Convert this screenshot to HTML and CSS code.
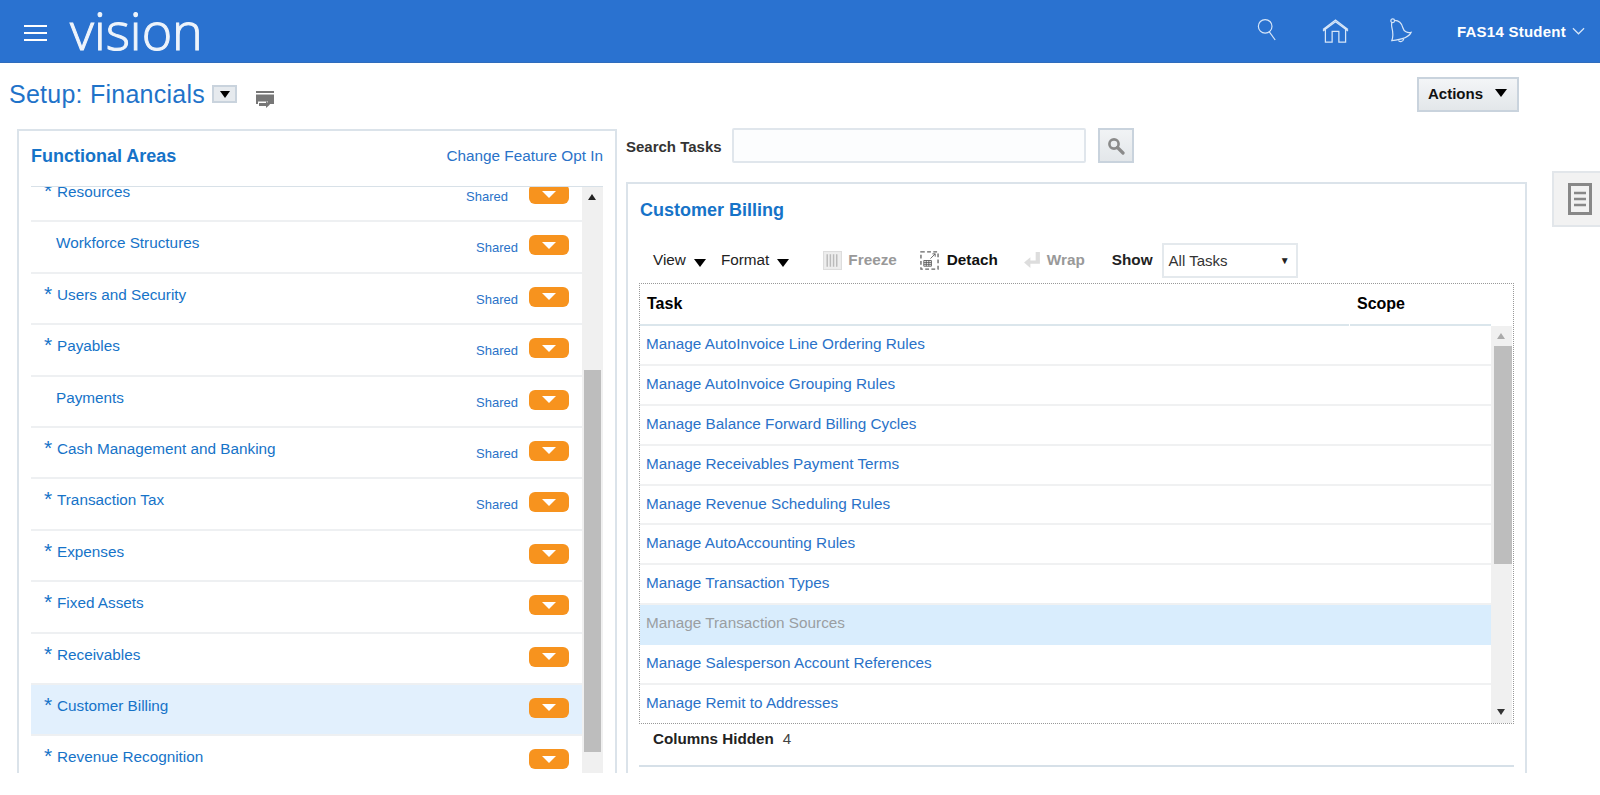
FILE: index.html
```html
<!DOCTYPE html>
<html lang="en">
<head>
<meta charset="utf-8">
<title>Setup: Financials</title>
<link rel="stylesheet" href="styles.css">
</head>
<body>
<header class="topbar">
  <div class="burger"><span></span><span></span><span></span></div>
  <div class="logo">vision</div>
  <div class="top-actions">
    <svg class="ti ti-search" viewBox="0 0 22 26"><circle cx="9" cy="9" r="7.5"/><path d="M13.5 15 L20 24"/></svg>
    <svg class="ti ti-home" viewBox="0 0 28 26"><path d="M1 12 L14 2 L27 12 M3.5 11 V25 H10.5 V14 H17.5 V25 H24.5 V11 M1 13.5 L14 4 L27 13.5"/></svg>
    <svg class="ti ti-bell" viewBox="0 0 26 28"><circle cx="4" cy="3.5" r="2"/><path d="M6 3 C11 3 14 7 15 11 C16 15 20 17 24 16 C22 21 13 24 3 25 C5 20 4 14 3 10 C2.5 8 3 6 3 5 M10 24 C11 27 15 27 16 23"/></svg>
    <span class="user">FAS14 Student</span>
    <svg class="ti ti-chev" viewBox="0 0 14 8"><path d="M1 1 L7 7 L13 1"/></svg>
  </div>
</header>

<div class="titlebar">
  <h1 class="page-title">Setup: Financials</h1>
  <span class="title-drop"><i class="tri tri-black"></i></span>
  <svg class="title-icon" viewBox="0 0 18 18"><path fill="#777" d="M0 0 H18 V2 H0 Z M0 3.5 H18 V13 H12 V10.5 H2 V13 H0 Z"/><path fill="#777" d="M3 12 H10 V10 L14 13.5 L10 17 V15 H3 Z"/></svg>
  <button class="actions-btn">Actions <i class="tri tri-black tri-actions"></i></button>
</div>

<main class="content">
  <section class="panel left-panel">
    <div class="left-head">
      <h2 class="panel-title">Functional Areas</h2>
      <a class="opt-in">Change Feature Opt In</a>
    </div>
    <div class="list-wrap">
      <div class="list">
        <div class="row row-first"><span class="star">*</span><a class="name">Resources</a><span class="shared shared-first">Shared</span><span class="badge"><i class="tri tri-white"></i></span></div>
        <div class="row"><span class="star"></span><a class="name name-plain">Workforce Structures</a><span class="shared">Shared</span><span class="badge"><i class="tri tri-white"></i></span></div>
        <div class="row"><span class="star">*</span><a class="name">Users and Security</a><span class="shared">Shared</span><span class="badge"><i class="tri tri-white"></i></span></div>
        <div class="row"><span class="star">*</span><a class="name">Payables</a><span class="shared">Shared</span><span class="badge"><i class="tri tri-white"></i></span></div>
        <div class="row"><span class="star"></span><a class="name name-plain">Payments</a><span class="shared">Shared</span><span class="badge"><i class="tri tri-white"></i></span></div>
        <div class="row"><span class="star">*</span><a class="name">Cash Management and Banking</a><span class="shared">Shared</span><span class="badge"><i class="tri tri-white"></i></span></div>
        <div class="row"><span class="star">*</span><a class="name">Transaction Tax</a><span class="shared">Shared</span><span class="badge"><i class="tri tri-white"></i></span></div>
        <div class="row"><span class="star">*</span><a class="name">Expenses</a><span class="badge"><i class="tri tri-white"></i></span></div>
        <div class="row"><span class="star">*</span><a class="name">Fixed Assets</a><span class="badge"><i class="tri tri-white"></i></span></div>
        <div class="row"><span class="star">*</span><a class="name">Receivables</a><span class="badge"><i class="tri tri-white"></i></span></div>
        <div class="row row-sel"><span class="star">*</span><a class="name">Customer Billing</a><span class="badge"><i class="tri tri-white"></i></span></div>
        <div class="row"><span class="star">*</span><a class="name">Revenue Recognition</a><span class="badge"><i class="tri tri-white"></i></span></div>
      </div>
      <div class="vbar left-bar">
        <i class="arrow-up"></i>
        <div class="thumb left-thumb"></div>
      </div>
    </div>
  </section>

  <div class="right-col">
    <div class="search-row">
      <label class="search-label">Search Tasks</label>
      <div class="search-input"></div>
      <button class="search-btn">
        <svg viewBox="0 0 18 18" width="18" height="18"><circle cx="7" cy="7" r="4.6" fill="none" stroke="#8a8a8a" stroke-width="2.6"/><path d="M10.5 10.5 L16 16" stroke="#8a8a8a" stroke-width="3.2" stroke-linecap="round"/></svg>
      </button>
    </div>
    <section class="panel right-panel">
      <h2 class="panel-title billing-title">Customer Billing</h2>
      <div class="toolbar">
        <span class="tool tool-view">View <i class="tri tri-black tri-tool"></i></span>
        <span class="tool tool-format">Format <i class="tri tri-black tri-tool"></i></span>
        <span class="tool tool-off tool-freeze">
          <svg class="tool-icon" viewBox="0 0 18 18"><rect x="0.5" y="0.5" width="17" height="17" fill="#eee" stroke="#ddd"/><path d="M4 3 V15 M7 3 V15 M10 3 V15 M13 3 V15" stroke="#bbb" stroke-width="1.4"/></svg>Freeze</span>
        <span class="tool tool-on tool-detach">
          <svg class="tool-icon" viewBox="0 0 20 20"><rect x="1" y="1" width="18" height="18" fill="none" stroke="#666" stroke-width="1.4" stroke-dasharray="4 2.5"/><path d="M11 8 L16 3 M13 3 H16 V6" stroke="#666" fill="none"/><path d="M4 10 H12 V16 H4 Z M4 12 H12 M4 14 H12 M6.6 10 V16 M9.3 10 V16" stroke="#555" fill="none" stroke-width="0.9"/></svg>Detach</span>
        <span class="tool tool-off tool-wrap">
          <svg class="tool-icon" viewBox="0 0 18 18"><path d="M12 1 H16 V12 H7 V16 L1 11 L7 6 V9 H12 Z" fill="#ddd"/></svg>Wrap</span>
        <span class="tool tool-on tool-show">Show</span>
        <div class="select"><span>All Tasks</span><i class="select-arrow">▼</i></div>
      </div>
      <div class="table">
        <div class="thead">
          <div class="th th-task">Task</div>
          <div class="th th-scope">Scope</div>
        </div>
        <div class="tbody">
          <div class="rows">
            <div class="tr"><a class="td-task">Manage AutoInvoice Line Ordering Rules</a></div>
            <div class="tr"><a class="td-task">Manage AutoInvoice Grouping Rules</a></div>
            <div class="tr"><a class="td-task">Manage Balance Forward Billing Cycles</a></div>
            <div class="tr"><a class="td-task">Manage Receivables Payment Terms</a></div>
            <div class="tr"><a class="td-task">Manage Revenue Scheduling Rules</a></div>
            <div class="tr"><a class="td-task">Manage AutoAccounting Rules</a></div>
            <div class="tr"><a class="td-task">Manage Transaction Types</a></div>
            <div class="tr tr-sel"><a class="td-task">Manage Transaction Sources</a></div>
            <div class="tr"><a class="td-task">Manage Salesperson Account References</a></div>
            <div class="tr tr-last"><a class="td-task">Manage Remit to Addresses</a></div>
          </div>
          <div class="vbar table-bar">
            <i class="arrow-up arrow-grey"></i>
            <div class="thumb table-thumb"></div>
            <i class="arrow-down"></i>
          </div>
        </div>
      </div>
      <div class="hidden-cols"><b>Columns Hidden</b><span>4</span></div>
      <div class="panel-rule"></div>
    </section>
  </div>

  <div class="side-tab">
    <svg viewBox="0 0 24 32" width="24" height="32"><rect x="1.5" y="1.5" width="21" height="29" fill="none" stroke="#888" stroke-width="3"/><path d="M6 10 H18 M6 16 H18 M6 22 H18" stroke="#888" stroke-width="2.4"/></svg>
  </div>
</main>
</body>
</html>
```
FILE: styles.css
```css
* { box-sizing: border-box; }
html, body { margin: 0; padding: 0; }
body {
  width: 1600px;
  height: 795px;
  overflow: hidden;
  background: #fff;
  font-family: "Liberation Sans", Arial, sans-serif;
  color: #222;
}
a { color: #1f73c9; text-decoration: none; }
h1, h2 { margin: 0; font-weight: normal; }
i { font-style: normal; }

/* top bar */
.topbar {
  height: 63px;
  background: #2a72d0;
  border-bottom: 1px solid #2f6cbc;
  display: flex;
  align-items: center;
  padding-left: 24px;
}
.burger { display: flex; flex-direction: column; gap: 5px; width: 23px; margin-top: 3px; }
.burger span { height: 2px; background: #fff; display: block; }
.logo {
  margin-left: 23px;
  font-family: "Open Sans", sans-serif;
  font-weight: 300;
  font-size: 52px;
  line-height: 62px;
  margin-top: -2px;
  color: #eef4fb;
  -webkit-text-stroke: 1px #eef4fb;
}
.top-actions { margin-left: auto; display: flex; align-items: center; padding-right: 15px; }
.ti { fill: none; stroke: #d7e6f8; stroke-width: 1.3; display: block; margin-top: -2px; }
.ti-search { width: 20px; height: 24px; margin-right: 45px; }
.ti-home { width: 27px; height: 25px; margin-right: 41px; }
.ti-bell { width: 24px; height: 27px; margin-right: 44px; margin-left: -1px; }
.user { color: #fff; font-weight: bold; font-size: 15px; letter-spacing: 0.25px; }
.ti-chev { width: 13px; height: 8px; margin-left: 6px; margin-top: 0; }

/* title row */
.titlebar {
  height: 66px;
  display: flex;
  align-items: flex-start;
  padding-left: 9px;
}
.page-title { font-size: 25px; color: #1f73c9; line-height: 30px; margin-top: 16px; letter-spacing: 0.25px; }
.title-drop {
  width: 25px; height: 18px;
  margin: 22px 0 0 7px;
  background: #e6eaee;
  border: 2px solid #c9d3dd;
  display: flex; align-items: center; justify-content: center;
}
.title-icon { width: 18px; height: 18px; margin: 28px 0 0 19px; }
.actions-btn {
  width: 102px; height: 35px;
  margin: 14px 81px 0 auto;
  background: linear-gradient(#f3f5f7, #e3e7ea);
  border: 2px solid #c9d3dd;
  font: bold 15px "Liberation Sans", Arial, sans-serif;
  color: #111;
  padding: 0 0 3px 9px;
  display: flex; align-items: center;
}

.tri { display: block; width: 0; height: 0; border-style: solid; border-color: transparent; border-bottom-width: 0; }
.tri-black { border-width: 7px 5.5px 0; border-top-color: #000; }
.tri-white { border-width: 7px 7px 0; border-top-color: #fff; }
.tri-actions { margin-left: 12px; border-width: 8px 6px 0; }
.tri-tool { margin-left: 8px; margin-top: 5px; border-width: 8px 6px 0; }

/* content */
.content { position: relative; display: flex; align-items: flex-start; padding-left: 17px; }
.panel { background: #fff; border: 2px solid #dbe3ea; border-bottom: 0; overflow: hidden; }
.panel-title { color: #1673c8; font-weight: bold; font-size: 18px; }

.left-panel { width: 600px; height: 644px; padding-left: 12px; padding-right: 12px; }
.left-head { height: 55px; display: flex; align-items: center; justify-content: space-between; padding-bottom: 5px; }
.opt-in { font-size: 15.3px; color: #2a72c8; }
.list-wrap { display: flex; height: 587px; border-top: 1px solid #d8e1e8; }
.list { width: 551px; height: 100%; overflow: hidden; flex: none; }
.row {
  height: 51.4px;
  display: flex;
  align-items: flex-start;
  border-bottom: 2px solid #eef0f2;
  position: relative;
  padding-left: 13px;
}
.row-first { margin-top: -16px; }
.row-sel { background: #e2f0fd; }
.star { width: 14px; font-size: 21px; color: #1673c8; line-height: 24px; margin-top: 8px; }
.name { font-size: 15.3px; color: #1673c8; line-height: 20px; margin-top: 11px; margin-left: -1px; }
.name-plain { margin-left: -2px; }
.shared { margin-left: auto; font-size: 13px; color: #2a72c8; line-height: 18px; margin-top: 17px; margin-right: 11px; }
.shared-first { margin-right: 21px; }
.badge {
  width: 40px; height: 20px;
  margin-top: 13px;
  margin-right: 13px;
  background: #f7931e;
  border-radius: 6px;
  display: flex; align-items: center; justify-content: center;
}
.row > .name + .badge { margin-left: auto; }

.vbar { position: relative; background: #f0f0f0; flex: none; display: flex; flex-direction: column; align-items: flex-start; }
.left-bar { width: 21px; height: 100%; }
.thumb { background: #bdbdbd; }
.left-thumb { width: 17px; height: 382px; margin-top: 183px; margin-left: 2px; }
.arrow-up { position: absolute; top: 7px; left: 6px; width: 0; height: 0; border: 4.5px solid transparent; border-top: 0; border-bottom: 6px solid #222; }
.arrow-grey { top: 7px; border-bottom-color: #aaa; }
.arrow-down { position: absolute; bottom: 8px; left: 6px; width: 0; height: 0; border: 4px solid transparent; border-bottom: 0; border-top: 6px solid #333; }

.right-col { width: 901px; margin-left: 9px; }
.search-row { display: flex; align-items: center; height: 35px; margin-top: -1px; }
.search-label { font-weight: bold; font-size: 15px; color: #333; width: 106px; padding-top: 1px; white-space: nowrap; }
.search-input { width: 354px; height: 35px; background: #fcfdfe; border: 2px solid #e0e6ec; border-radius: 2px; }
.search-btn {
  width: 36px; height: 35px; margin-left: 12px; padding: 0;
  background: linear-gradient(#f1f3f5, #e3e7ea);
  border: 2px solid #c9d3dd;
  display: flex; align-items: center; justify-content: center;
}

.right-panel { margin-top: 19px; width: 901px; height: 591px; padding: 0 12px; }
.billing-title { padding-top: 16px; line-height: 20px; }
.toolbar { display: flex; align-items: center; height: 36px; margin-top: 22px; font-size: 15.3px; color: #222; }
.tool { display: flex; align-items: center; }
.tool-view { margin-left: 13px; }
.tool-format { margin-left: 15px; }
.tool-freeze { margin-left: 34px; }
.tool-detach { margin-left: 23px; }
.tool-wrap { margin-left: 25px; }
.tool-show { margin-left: 27px; }
.tool-off { color: #999; font-weight: bold; }
.tool-on { color: #222; font-weight: bold; }
.tool-detach { color: #111; }
.tool-icon { width: 19px; height: 19px; margin-right: 6px; }
.tool-detach .tool-icon { margin-right: 8px; }
.tool-wrap .tool-icon { margin-right: 5px; }
.select {
  width: 136px; height: 35px; margin-left: 9px;
  border: 2px solid #e4e9ed;
  display: flex; align-items: center; justify-content: space-between;
  padding: 0 5px;
  font-size: 15px; color: #333;
}
.select-arrow { font-size: 10px; color: #222; margin-right: 1px; }

.table { margin: 5px 0 0 -1px; width: 875px; height: 441px; border: 1px dotted #999; }
.thead { display: flex; height: 42px; }
.th { font-weight: bold; font-size: 16px; color: #000; line-height: 39px; border-bottom: 2px solid #dbe6ec; }
.th-task { width: 709px; margin-right: 1px; padding-left: 7px; }
.th-scope { width: 141px; padding-left: 7px; }
.tbody { display: flex; height: 397px; }
.rows { width: 851px; flex: none; }
.tr { height: 39.9px; display: flex; border-bottom: 2px solid #f0f1f2; }
.tr-last { border-bottom: 0; }
.tr-sel { background: #d9edfd; border-bottom-color: #d9edfd; }
.tr-sel .td-task { color: #9a9ea2; }
.td-task { width: 709px; padding-left: 6px; font-size: 15.3px; color: #2a72c8; line-height: 35px; flex: none; }
.table-bar { width: 21px; height: 100%; }
.table-thumb { width: 18px; height: 218px; margin-top: 20px; margin-left: 3px; }

.hidden-cols { display: flex; gap: 9px; height: 41px; align-items: center; padding: 0 0 12px 13px; font-size: 15.2px; color: #444; }
.hidden-cols b { color: #222; }
.panel-rule { height: 2px; background: #d6e0e8; width: 875px; margin-left: -1px; }

.side-tab {
  position: absolute;
  top: 42px;
  right: 0;
  width: 48px;
  height: 56px;
  background: #f2f2f2;
  border: 2px solid #e2e6ea;
  border-right: 0;
  display: flex; align-items: center; justify-content: center;
  padding-left: 6px;
}
```
